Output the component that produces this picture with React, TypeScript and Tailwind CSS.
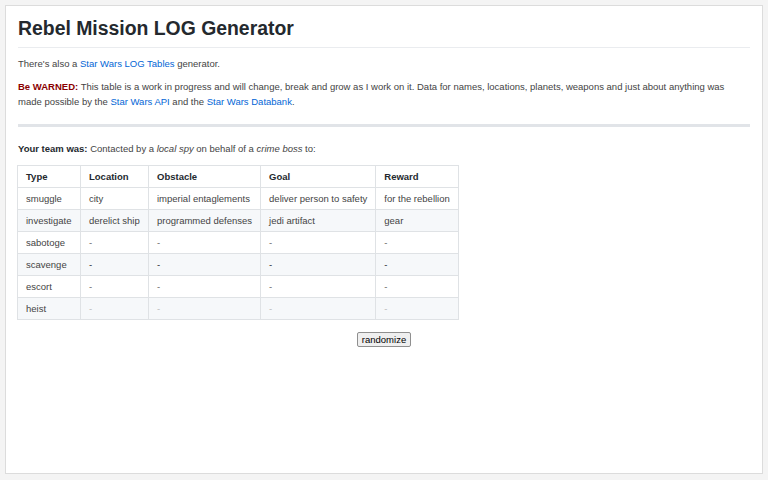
import React from 'react';

type Row = { cells: string[]; dash?: string };

const headers = ['Type', 'Location', 'Obstacle', 'Goal', 'Reward'];
const widths = ['w-[63px]', 'w-[68px]', 'w-[110px]', 'w-[115px]', 'w-[83px]'];

const rows: Row[] = [
  { cells: ['smuggle', 'city', 'imperial entaglements', 'deliver person to safety', 'for the rebellion'] },
  { cells: ['investigate', 'derelict ship', 'programmed defenses', 'jedi artifact', 'gear'] },
  { cells: ['sabotoge', '-', '-', '-', '-'], dash: 'text-[#666]' },
  { cells: ['scavenge', '-', '-', '-', '-'], dash: 'text-[#24292e]' },
  { cells: ['escort', '-', '-', '-', '-'], dash: 'text-[#666]' },
  { cells: ['heist', '-', '-', '-', '-'], dash: 'text-[#bbb]' },
];

const Link: React.FC<{ children: React.ReactNode }> = ({ children }) => (
  <a className="text-[#0366d6] cursor-pointer">{children}</a>
);

export default function App() {
  return (
    <div className="min-h-[480px] bg-[#f4f4f4] pt-[5px] font-['Liberation_Sans',Arial,sans-serif] text-[9.5px] leading-[15px] text-[#444]">
      <div className="mx-[5px] h-[469px] border border-[#dcdcdc] bg-white px-[12px] pt-[10px]">
        <h1 className="border-b border-[#eaecef] pb-[6px] text-[19.4px] font-bold leading-[25px] text-[#24292e]">
          Rebel Mission LOG Generator
        </h1>

        <p className="mt-[8px]">
          There's also a <Link>Star Wars LOG Tables</Link> generator.
        </p>

        <p className="mt-[8px]">
          <strong className="text-[#8b0000]">Be WARNED:</strong> This table is a work in progress and will change, break and grow as I work on it. Data for names, locations, planets, weapons and just about anything was made possible by the <Link>Star Wars API</Link> and the <Link>Star Wars Databank</Link>.
        </p>

        <div className="mt-[15px] h-[3px] bg-[#e1e4e8]" />

        <p className="mt-[14px]">
          <strong className="text-[#24292e]">Your team was:</strong> Contacted by a <em>local spy</em> on behalf of a <em>crime boss</em> to:
        </p>

        <table className="ml-[-1px] mt-[9px] border-collapse">
          <thead>
            <tr>
              {headers.map((h, i) => (
                <th
                  key={h}
                  className={`${widths[i]} h-[22px] whitespace-nowrap border border-[#dfe2e5] px-[8px] text-left font-bold text-[#24292e]`}
                >
                  {h}
                </th>
              ))}
            </tr>
          </thead>
          <tbody>
            {rows.map((r, ri) => (
              <tr key={r.cells[0]} className={ri % 2 === 0 ? 'bg-white' : 'bg-[#f6f8fa]'}>
                {r.cells.map((c, ci) => (
                  <td
                    key={ci}
                    className={`h-[22px] whitespace-nowrap border border-[#dfe2e5] px-[8px] ${ci > 0 && r.dash ? r.dash : ''}`}
                  >
                    {c}
                  </td>
                ))}
              </tr>
            ))}
          </tbody>
        </table>

        <div className="mt-[12px] flex justify-center">
          <button className="rounded-[2px] border border-[#8f8f8f] bg-[#efefef] px-[4px] text-[9.5px] leading-[13px] text-black">
            randomize
          </button>
        </div>
      </div>
    </div>
  );
}
